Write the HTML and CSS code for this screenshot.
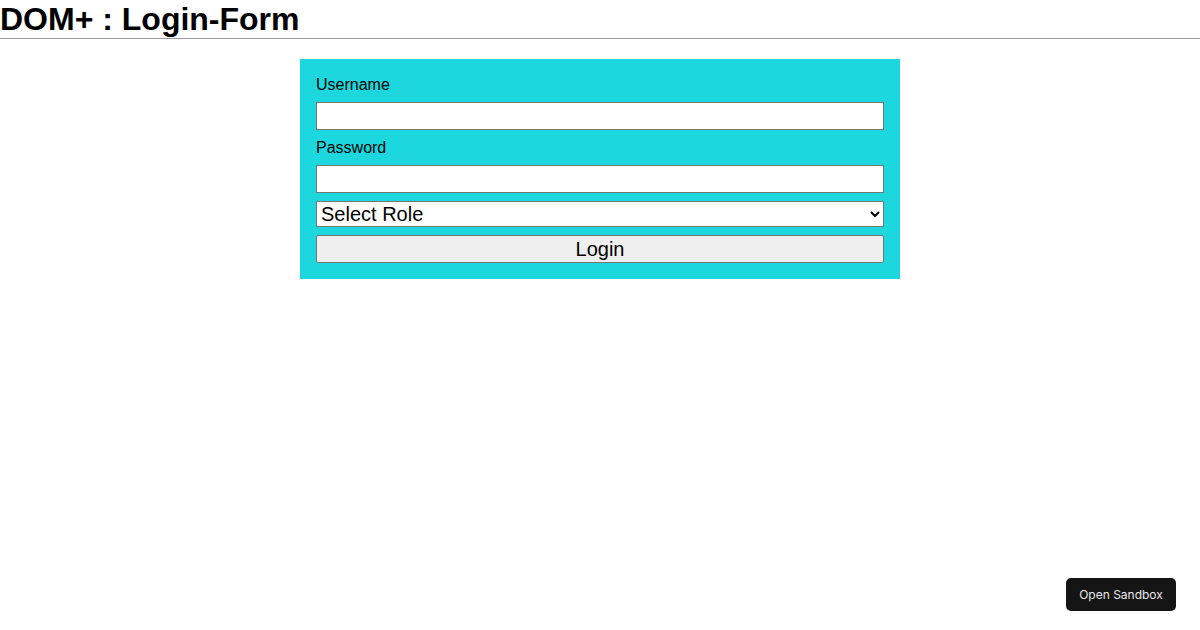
FILE: index.html
```html
<!DOCTYPE html>
<html>
<head>
<meta charset="utf-8">
<link rel="stylesheet" href="styles.css">
</head>
<body>
<h1 class="title">DOM+ : Login-Form</h1>
<form class="login">
  <label class="field-label" for="u">Username</label>
  <input class="text-input" id="u" type="text">
  <label class="field-label" for="p">Password</label>
  <input class="text-input" id="p" type="password">
  <select class="role-select">
    <option>Select Role</option>
  </select>
  <button class="login-btn" type="button">Login</button>
</form>
<button class="sandbox-btn" type="button">Open Sandbox</button>
</body>
</html>
```
FILE: styles.css
```css
html, body {
  margin: 0;
  padding: 0;
  background: #ffffff;
  font-family: "Liberation Sans", Arial, sans-serif;
  color: #000;
}

.title {
  margin: 0;
  font-size: 32px;
  font-weight: bold;
  line-height: 38px;
  border-bottom: 1px solid #999999;
}

.login {
  width: 600px;
  box-sizing: border-box;
  margin: 20px auto 0;
  padding: 16px;
  background: #1cd8de;
  display: flex;
  flex-direction: column;
  gap: 8px;
}

.field-label {
  font-size: 16px;
  line-height: 19px;
}

.text-input {
  box-sizing: border-box;
  height: 28px;
  margin: 0;
  border: 1px solid #767676;
  background: #fff;
  font-family: "Liberation Sans", Arial, sans-serif;
  font-size: 16px;
}

.role-select {
  box-sizing: border-box;
  height: 26px;
  margin: 0;
  font-family: "Liberation Sans", Arial, sans-serif;
  font-size: 20px;
  border: 1px solid #767676;
  background: #fff;
  color: #000;
}

.login-btn {
  box-sizing: border-box;
  height: 28px;
  margin: 0;
  padding: 0;
  font-family: "Liberation Sans", Arial, sans-serif;
  font-size: 20px;
  background: #efefef;
  border: 1px solid #767676;
  border-radius: 2px;
  color: #000;
}

.sandbox-btn {
  position: fixed;
  right: 24px;
  bottom: 19px;
  width: 110px;
  height: 33px;
  padding: 0;
  background: #151515;
  color: #e8e8e8;
  border: none;
  border-radius: 5px;
  font-family: Inter, "Liberation Sans", sans-serif;
  font-size: 12px;
}
```
